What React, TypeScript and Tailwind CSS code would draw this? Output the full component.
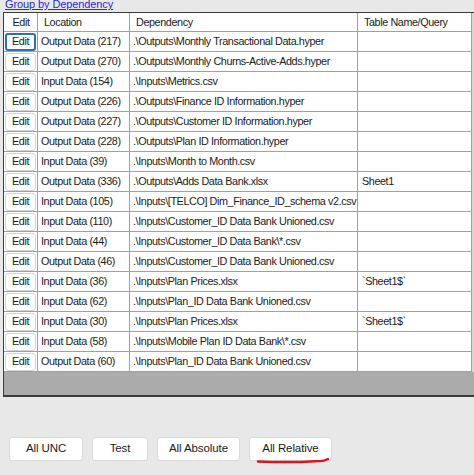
import React from 'react';

interface Row {
  location: string;
  dependency: string;
  table: string;
}

const rows: Row[] = [
  { location: 'Output Data (217)', dependency: '.\\Outputs\\Monthly Transactional Data.hyper', table: '' },
  { location: 'Output Data (270)', dependency: '.\\Outputs\\Monthly Churns-Active-Adds.hyper', table: '' },
  { location: 'Input Data (154)', dependency: '.\\Inputs\\Metrics.csv', table: '' },
  { location: 'Output Data (226)', dependency: '.\\Outputs\\Finance ID Information.hyper', table: '' },
  { location: 'Output Data (227)', dependency: '.\\Outputs\\Customer ID Information.hyper', table: '' },
  { location: 'Output Data (228)', dependency: '.\\Outputs\\Plan ID Information.hyper', table: '' },
  { location: 'Input Data (39)', dependency: '.\\Inputs\\Month to Month.csv', table: '' },
  { location: 'Output Data (336)', dependency: '.\\Outputs\\Adds Data Bank.xlsx', table: 'Sheet1' },
  { location: 'Input Data (105)', dependency: '.\\Inputs\\[TELCO] Dim_Finance_ID_schema v2.csv', table: '' },
  { location: 'Input Data (110)', dependency: '.\\Inputs\\Customer_ID Data Bank Unioned.csv', table: '' },
  { location: 'Input Data (44)', dependency: '.\\Inputs\\Customer_ID Data Bank\\*.csv', table: '' },
  { location: 'Output Data (46)', dependency: '.\\Inputs\\Customer_ID Data Bank Unioned.csv', table: '' },
  { location: 'Input Data (36)', dependency: '.\\Inputs\\Plan Prices.xlsx', table: '`Sheet1$`' },
  { location: 'Input Data (62)', dependency: '.\\Inputs\\Plan_ID Data Bank Unioned.csv', table: '' },
  { location: 'Input Data (30)', dependency: '.\\Inputs\\Plan Prices.xlsx', table: '`Sheet1$`' },
  { location: 'Input Data (58)', dependency: '.\\Inputs\\Mobile Plan ID Data Bank\\*.csv', table: '' },
  { location: 'Output Data (60)', dependency: '.\\Inputs\\Plan_ID Data Bank Unioned.csv', table: '' },
];

const cols = 'grid grid-cols-[34px_92px_228px_113px]';

export default function App() {
  return (
    <div
      className="w-[474px] h-[475px] overflow-hidden bg-[#e8e8e8] text-[10.8px] tracking-[-0.4px] text-[#1a1a1a]"
      style={{ fontFamily: '"Liberation Sans", Arial, sans-serif' }}
    >
      {/* Link */}
      <div className="h-[14px] pl-[5px] -mt-[2px] leading-[13px] text-[11px] tracking-[-0.1px]">
        <a className="text-[#2a2ae0] underline">Group by Dependency</a>
      </div>

      {/* Grid */}
      <div className="ml-[3px] w-[472px] h-[385px] border border-[#3c3c3c] border-b-2 bg-[#ababab] flex flex-col">
        <div className="flex bg-white">
          <div className={`${cols} flex-none`}>
            <div className="h-[19px] flex items-center justify-center border-r border-b border-[#a0a0a0] pl-[1px]">Edit</div>
            <div className="h-[19px] flex items-center pl-[6px] border-r border-b border-[#a0a0a0]">Location</div>
            <div className="h-[19px] flex items-center pl-[6px] border-r border-b border-[#a0a0a0]">Dependency</div>
            <div className="h-[19px] flex items-center pl-[6px] border-b border-[#a0a0a0]">Table Name/Query</div>
          </div>
          <div className="flex-1 border-l border-[#a0a0a0] bg-[#d8d8d8]" />
        </div>
        {rows.map((r, i) => (
          <div key={i} className="flex">
            <div className={`${cols} flex-none bg-white`}>
              <div className="h-[20px] flex items-center pl-[1px] border-r border-b border-[#a0a0a0]">
                <button
                  className={`w-[31px] h-[18px] rounded-[3px] bg-white flex items-center justify-center ${
                    i === 0 ? 'border-2 border-[#2c6fbf]' : 'border border-[#d4d4d4]'
                  }`}
                >
                  Edit
                </button>
              </div>
              <div className="h-[20px] flex items-center pl-[3px] border-r border-b border-[#a0a0a0] whitespace-nowrap overflow-hidden">
                {r.location}
              </div>
              <div className="h-[20px] flex items-center pl-[3px] border-r border-b border-[#a0a0a0] whitespace-nowrap overflow-hidden">
                {r.dependency}
              </div>
              <div className="h-[20px] flex items-center pl-[4px] border-b border-[#a0a0a0] whitespace-nowrap overflow-hidden">
                {r.table}
              </div>
            </div>
            <div className="flex-1 border-l border-[#a0a0a0] bg-[#d8d8d8]" />
          </div>
        ))}
        <div className="flex-1" />
      </div>

      {/* Buttons */}
      <div className="flex gap-[9px] pl-[9px] mt-[40px] text-[11.5px] tracking-[-0.1px]">
        <button className="w-[74px] h-[24px] bg-white rounded-[3px] border border-[#dadada] font-medium">All UNC</button>
        <button className="w-[56px] h-[24px] bg-white rounded-[3px] border border-[#dadada] font-medium">Test</button>
        <button className="w-[83px] h-[24px] bg-white rounded-[3px] border border-[#dadada] font-medium">All Absolute</button>
        <div className="relative">
          <button className="w-[83px] h-[24px] bg-white rounded-[3px] border border-[#dadada] font-medium">All Relative</button>
          <svg className="absolute left-[6px] top-[19px]" width="76" height="8" viewBox="0 0 76 8">
            <path
              d="M3 5.5 C20 6.2 40 6.4 60 5.2 C66 4.8 68 6 73 3"
              stroke="#e3121a"
              strokeWidth="2.4"
              fill="none"
              strokeLinecap="round"
            />
          </svg>
        </div>
      </div>
    </div>
  );
}
